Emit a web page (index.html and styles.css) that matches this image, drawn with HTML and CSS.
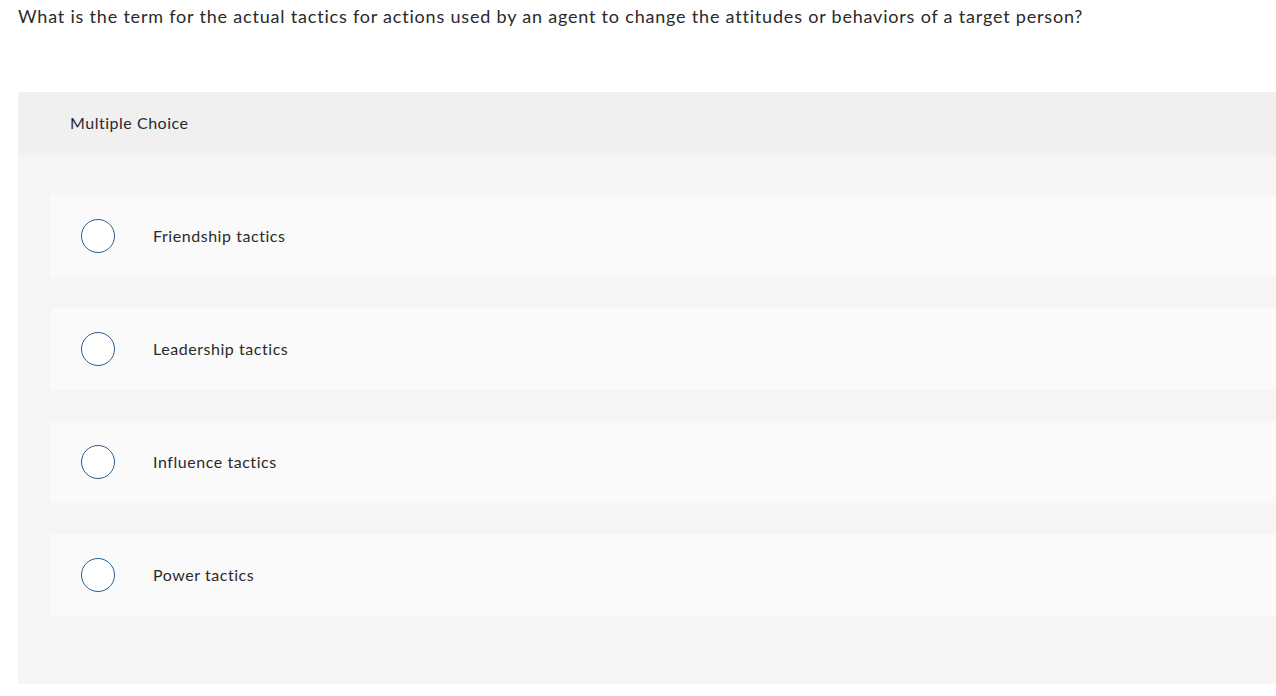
FILE: index.html
```html
<!DOCTYPE html>
<html>
<head>
<meta charset="utf-8">
<link rel="stylesheet" href="styles.css">
</head>
<body>
<div class="page">
  <p class="question">What is the term for the actual tactics for actions used by an agent to change the attitudes or behaviors of a target person?</p>
  <div class="card">
    <div class="card-head">Multiple Choice</div>
    <div class="card-body">
      <label class="option"><span class="radio"></span><span class="label">Friendship tactics</span></label>
      <label class="option"><span class="radio"></span><span class="label">Leadership tactics</span></label>
      <label class="option"><span class="radio"></span><span class="label">Influence tactics</span></label>
      <label class="option"><span class="radio"></span><span class="label">Power tactics</span></label>
    </div>
  </div>
</div>
</body>
</html>
```

FILE: styles.css
```css
html, body {
  margin: 0;
  padding: 0;
  background: #fff;
  overflow: hidden;
}
.page {
  width: 1300px;
  padding-left: 18px;
  font-family: "Lato", "Open Sans", sans-serif;
  color: #222;
}
.question {
  margin: 0;
  padding-top: 4px;
  font-size: 18px;
  letter-spacing: 0.8px;
  line-height: 24px;
  color: #2a2a2a;
}
.card {
  margin-top: 64px;
  border-radius: 3px;
  overflow: hidden;
  background: #f5f5f5;
}
.card-head {
  height: 63px;
  background: #f0f0f0;
  padding-left: 52px;
  padding-bottom: 2px;
  box-sizing: border-box;
  display: flex;
  align-items: center;
  font-size: 16px;
  letter-spacing: 0.52px;
  color: #1f2a36;
}
.card-body {
  padding: 40px 0 68px 32px;
  display: flex;
  flex-direction: column;
  gap: 31px;
}
.option {
  height: 82px;
  background: #fafafa;
  border-radius: 3px 0 0 3px;
  display: flex;
  align-items: center;
  padding-left: 31px;
}
.radio {
  width: 32px;
  height: 32px;
  border: 1.5px solid #2b5d8f;
  border-radius: 50%;
  background: #fff;
  flex: none;
}
.label {
  margin-left: 38px;
  margin-bottom: 2px;
  font-size: 16px;
  letter-spacing: 0.55px;
  color: #2a2a2a;
}
```
